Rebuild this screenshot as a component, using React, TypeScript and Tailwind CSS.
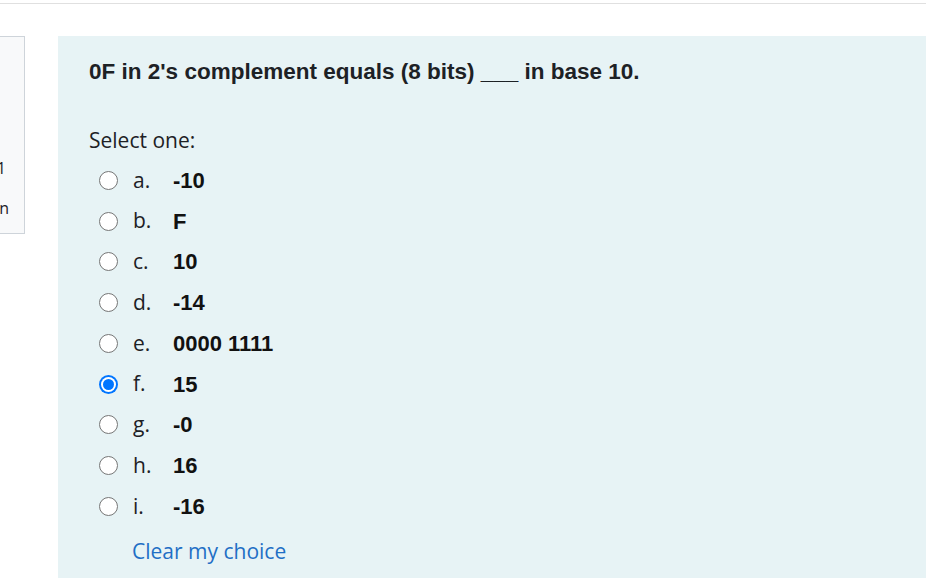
const options = [
  { letter: "a.", text: "-10" },
  { letter: "b.", text: "F" },
  { letter: "c.", text: "10" },
  { letter: "d.", text: "-14" },
  { letter: "e.", text: "0000 1111" },
  { letter: "f.", text: "15", checked: true },
  { letter: "g.", text: "-0" },
  { letter: "h.", text: "16" },
  { letter: "i.", text: "-16" },
]

function Radio({ checked }: { checked?: boolean }) {
  if (checked) {
    return (
      <div className="flex h-[19px] w-[19px] items-center justify-center rounded-full bg-[#0075ff]">
        <div className="flex h-[15px] w-[15px] items-center justify-center rounded-full bg-white">
          <div className="h-[11px] w-[11px] rounded-full bg-[#0075ff]" />
        </div>
      </div>
    )
  }
  return <div className="h-[19px] w-[19px] rounded-full border-[1.5px] border-[#767676] bg-white" />
}

export default function App() {
  return (
    <div className="h-[578px] w-[926px] overflow-hidden bg-white text-[#1d2125]">
      <div className="mt-[3px] h-px bg-[#e0e0e0]" />

      <div className="mt-[32px] flex items-start">
        {/* info block, mostly off-screen */}
        <div className="flex h-[198px] w-[25px] flex-col items-end overflow-hidden border border-l-0 border-[#ced4da] bg-[#f8f9fa] pr-[18px] pt-[121px] font-['Open_Sans',sans-serif] text-[16px] leading-[20px] text-[#1d2125]">
          <span className="whitespace-nowrap">Question 1</span>
          <span className="mt-[20px] mr-[-3px] whitespace-nowrap">Flag question</span>
        </div>

        <div className="ml-[33px] h-[560px] flex-1 bg-[#e7f3f5] pl-[31px] pt-[23px]">
          <h2 className="font-['Liberation_Sans',Arial,sans-serif] text-[22.5px] font-bold leading-[26px]">
            0F in 2's complement equals (8 bits) ___ in base 10.
          </h2>

          <p className="mt-[41px] font-['Open_Sans',sans-serif] text-[21px] leading-[28px]">Select one:</p>

          <div className="mt-[6px] flex flex-col">
            {options.map((o) => (
              <div key={o.letter} className="flex h-[40.75px] items-center">
                <div className="ml-[10px] w-[34px]">
                  <Radio checked={o.checked} />
                </div>
                <span className="w-[40px] font-['Open_Sans',sans-serif] text-[21px]">{o.letter}</span>
                <span className="font-['Liberation_Sans',Arial,sans-serif] text-[22px] font-bold text-[#111]">{o.text}</span>
              </div>
            ))}
          </div>

          <a href="#" className="ml-[43px] mt-[10px] inline-block font-['Open_Sans',sans-serif] text-[21px] leading-[28px] text-[#1f6fc5]">
            Clear my choice
          </a>
        </div>
      </div>
    </div>
  )
}
